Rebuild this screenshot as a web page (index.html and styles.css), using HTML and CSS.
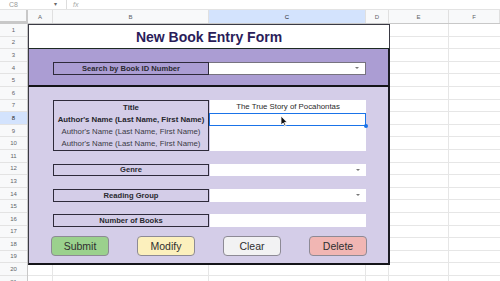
FILE: index.html
```html
<!DOCTYPE html>
<html>
<head>
<meta charset="utf-8">
<link rel="stylesheet" href="styles.css">
</head>
<body>
<div class="formula-bar">
  <span class="name-box">C8</span>
  <span class="name-arrow">▾</span>
  <span class="fx-sep"></span>
  <span class="fx">fx</span>
</div>
<div class="col-headers">
  <div class="corner"></div>
  <div class="ch ch-a">A</div>
  <div class="ch ch-b">B</div>
  <div class="ch ch-c active">C</div>
  <div class="ch ch-d">D</div>
  <div class="ch ch-e">E</div>
  <div class="ch ch-f">F</div>
</div>
<div class="sheet-body">
  <div class="row-headers">
    <div class="rh">1</div><div class="rh">2</div><div class="rh">3</div><div class="rh">4</div>
    <div class="rh">5</div><div class="rh">6</div><div class="rh">7</div><div class="rh active">8</div>
    <div class="rh">9</div><div class="rh">10</div><div class="rh">11</div><div class="rh">12</div>
    <div class="rh">13</div><div class="rh">14</div><div class="rh">15</div><div class="rh">16</div>
    <div class="rh">17</div><div class="rh">18</div><div class="rh">19</div><div class="rh">20</div>
    <div class="rh">21</div>
  </div>
  <div class="canvas">
    <div class="form">
      <div class="band title-band">New Book Entry Form</div>
      <div class="band search-band"></div>
      <div class="band main-band"></div>

      <div class="label label-search">Search by Book ID Number</div>
      <div class="dropdown dd-search"><span class="arrow"></span></div>

      <div class="label-group">
        <div class="lg-line bold">Title</div>
        <div class="lg-line bold">Author's Name (Last Name, First Name)</div>
        <div class="lg-line">Author's Name (Last Name, First Name)</div>
        <div class="lg-line">Author's Name (Last Name, First Name)</div>
      </div>
      <div class="value-group">
        <div class="vg-cell">The True Story of Pocahontas</div>
        <div class="vg-cell selected">
          <span class="handle"></span>
          <svg class="cursor" width="8" height="12" viewBox="0 0 8 12"><path d="M1 1 L1 10 L3.2 8 L4.8 11.2 L6 10.6 L4.5 7.5 L7.2 7.5 Z" fill="#111" stroke="#fff" stroke-width="0.8"/></svg>
        </div>
        <div class="vg-cell"></div>
        <div class="vg-cell"></div>
      </div>

      <div class="label label-genre">Genre</div>
      <div class="dropdown dd-genre"><span class="arrow"></span></div>

      <div class="label label-group-r">Reading Group</div>
      <div class="dropdown dd-group"><span class="arrow"></span></div>

      <div class="label label-count">Number of Books</div>
      <div class="dropdown dd-count"></div>

      <div class="buttons">
        <div class="btn btn-submit">Submit</div>
        <div class="btn btn-modify">Modify</div>
        <div class="btn btn-clear">Clear</div>
        <div class="btn btn-delete">Delete</div>
      </div>
    </div>
  </div>
</div>
</body>
</html>
```
FILE: styles.css
```css
* { box-sizing: border-box; }
html, body { margin: 0; padding: 0; background: #fff; }
body {
  width: 500px;
  height: 281px;
  overflow: hidden;
  font-family: "Liberation Sans", Arial, sans-serif;
  color: #222;
}

.formula-bar {
  height: 10px;
  border-bottom: 1px solid #e3e3e3;
  display: flex;
  align-items: flex-start;
  color: #9a9a9a;
  font-size: 7px;
  line-height: 7px;
  padding-top: 1px;
}
.name-box { margin-left: 9px; width: 40px; }
.name-arrow { margin-left: 5px; font-size: 6px; color: #666; }
.fx-sep { width: 1px; height: 9px; margin-top: -1px; background: #ddd; margin-left: 9px; }
.fx { margin-left: 6px; font-style: italic; color: #aaa; }

.col-headers {
  display: flex;
  height: 14px;
  background: #f8f9fa;
  border-bottom: 1px solid #c8c8c8;
}
.corner {
  width: 28px;
  border-right: 2px solid #c8c8c8;
  border-bottom: 2px solid #c8c8c8;
  background: #f8f9fa;
}
.ch {
  border-right: 1px solid #e0e0e0;
  font-size: 6px;
  color: #5f6368;
  display: flex;
  align-items: center;
  justify-content: center;
}
.ch.active { background: #d3e3fd; color: #1f1f1f; }
.ch-a { width: 25px; }
.ch-b { width: 156px; }
.ch-c { width: 157px; }
.ch-d { width: 23px; }
.ch-e { width: 60px; }
.ch-f { width: 51px; }

.sheet-body { display: flex; }
.row-headers {
  width: 28px;
  flex: none;
  border-right: 1px solid #c8c8c8;
  background: #f8f9fa;
}
.rh {
  height: 12.6px;
  border-bottom: 1px solid #e3e3e3;
  font-size: 6px;
  color: #5f6368;
  display: flex;
  align-items: center;
  justify-content: center;
}
.rh.active { background: #d3e3fd; color: #1f1f1f; }

.canvas {
  flex: 1;
  height: 265px;
  background-color: #fff;
  background-image:
    repeating-linear-gradient(to bottom, transparent 0 11.6px, #e6e6e6 11.6px 12.6px),
    linear-gradient(#e6e6e6, #e6e6e6),
    linear-gradient(#e6e6e6, #e6e6e6),
    linear-gradient(#e6e6e6, #e6e6e6),
    linear-gradient(#e6e6e6, #e6e6e6),
    linear-gradient(#e6e6e6, #e6e6e6);
  background-size: 100% 100%, 1px 100%, 1px 100%, 1px 100%, 1px 100%, 1px 100%;
  background-position: 0 0, 24px 0, 180px 0, 337px 0, 360px 0, 420px 0;
  background-repeat: no-repeat;
}

.form {
  width: 362px;
  display: grid;
  grid-template-columns: 25px 156px 157px 24px;
  grid-template-rows: repeat(19, 12.7px);
}

.band { grid-column: 1 / -1; border-right: 2px solid #1c1c24; border-left: 1px solid #3a3a44; }
.title-band {
  grid-row: 1 / 3;
  background: #fff;
  border-top: 1px solid #3a3a44;
  border-bottom: 1.5px solid #1d2b22;
  border-right: 1px solid #3a3a44;
  display: flex;
  align-items: center;
  justify-content: center;
  font-weight: bold;
  font-size: 14px;
  color: #2a1d5a;
  padding-top: 1px;
}
.search-band {
  grid-row: 3 / 6;
  background: #ab9dd3;
  border-bottom: 2px solid #141418;
}
.main-band {
  grid-row: 6 / 20;
  background: #d4cde8;
  border-bottom: 2px solid #141418;
}

.label {
  grid-column: 2;
  border: 1.5px solid #2e2a3a;
  font-size: 7.6px;
  font-weight: bold;
  color: #2a2a30;
  display: flex;
  align-items: center;
  justify-content: center;
}
.label-search { grid-row: 4; }
.label-genre { grid-row: 12; }
.label-group-r { grid-row: 14; }
.label-count { grid-row: 16; }

.dropdown {
  grid-column: 3;
  background: #fff;
  position: relative;
  display: flex;
  align-items: center;
  justify-content: flex-end;
  padding-right: 6px;
}
.dd-search { grid-row: 4; border: 1px solid #77737f; border-left: none; }
.dd-genre { grid-row: 12; margin-left: 1px; }
.dd-group { grid-row: 14; margin-left: 1px; }
.dd-count { grid-row: 16; margin-left: 1px; }
.arrow {
  width: 0;
  height: 0;
  border-left: 2.2px solid transparent;
  border-right: 2.2px solid transparent;
  border-top: 2.5px solid #777;
}

.label-group {
  grid-column: 2;
  grid-row: 7 / 11;
  border: 1.5px solid #2e2a3a;
  display: flex;
  flex-direction: column;
  justify-content: center;
}
.lg-line {
  height: 12.2px;
  font-size: 7.8px;
  color: #3a3a44;
  display: flex;
  align-items: center;
  justify-content: center;
  white-space: nowrap;
}
.lg-line.bold { font-weight: bold; color: #25252c; }

.value-group {
  grid-column: 3;
  grid-row: 7 / 11;
  background: #fff;
  margin-left: 1px;
  display: flex;
  flex-direction: column;
}
.vg-cell {
  height: 12.7px;
  font-size: 7.8px;
  color: #2a2a2a;
  display: flex;
  align-items: center;
  justify-content: center;
  position: relative;
}
.vg-cell.selected { border: 1.5px solid #1a73e8; margin-left: -1px; }
.handle {
  position: absolute;
  right: -3px;
  bottom: -3px;
  width: 4px;
  height: 4px;
  background: #1a73e8;
  border-radius: 50%;
}
.cursor { position: absolute; left: 70px; top: 1px; }

.buttons {
  grid-column: 1 / -1;
  grid-row: 17 / 20;
  display: flex;
  align-items: center;
  padding-left: 23px;
  padding-bottom: 1px;
  gap: 28px;
}
.btn {
  width: 58px;
  height: 20px;
  border: 1px solid #8d8a95;
  border-radius: 4px;
  font-size: 10.5px;
  color: #2f2f2f;
  display: flex;
  align-items: center;
  justify-content: center;
}
.btn-submit { background: #9bd18d; }
.btn-modify { background: #fcf0bd; }
.btn-clear { background: #f2f2f3; }
.btn-delete { background: #f1b6b3; }
```
